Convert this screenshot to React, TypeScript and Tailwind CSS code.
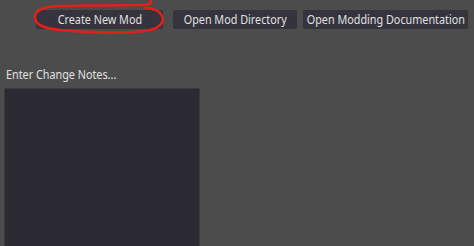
import React from 'react';

const font = { fontFamily: '"Noto Sans", "DejaVu Sans", sans-serif' };

function ToolButton({ label, className }: { label: string; className: string }) {
  return (
    <button
      className={`flex h-[19px] items-center justify-center whitespace-nowrap rounded-[2px] bg-[#35343c] text-[12px] text-[#e0e0e0] ${className}`}
    >
      <span className="inline-block scale-x-[0.9]">{label}</span>
    </button>
  );
}

export default function App() {
  return (
    <div className="relative h-[246px] w-[474px] overflow-hidden bg-[#4c4c4c]" style={font}>
      {/* Button row */}
      <div className="flex pt-[10px] pl-[36px]">
        <ToolButton label="Create New Mod" className="w-[127px]" />
        <ToolButton label="Open Mod Directory" className="ml-[10px] w-[124px]" />
        <ToolButton label="Open Modding Documentation" className="ml-[6px] w-[165px]" />
      </div>

      {/* Change notes */}
      <div className="mt-[38px] px-[6px] text-[12px] leading-[16px] text-[#e0e0e0]">
        <span className="inline-block origin-left scale-x-[0.9]">Enter Change Notes...</span>
      </div>
      <div className="ml-[4px] mt-[5px] h-[170px] w-[196px] border border-[#3b3a44] bg-[#2b2a33]" />

      {/* Hand-drawn annotation */}
      <svg
        className="pointer-events-none absolute left-0 top-0"
        width="474"
        height="246"
        viewBox="0 0 474 246"
        fill="none"
      >
        <path
          d="M150 0 C153 3 149 5 140 5 L60 6 C45 6 36 10 35 16 C34 24 42 28 60 30 C90 33 130 34 150 30 C162 27 166 20 160 13 C156 9 150 8 145 8"
          stroke="#e0201c"
          strokeWidth="2.6"
          strokeLinecap="round"
        />
      </svg>
    </div>
  );
}
